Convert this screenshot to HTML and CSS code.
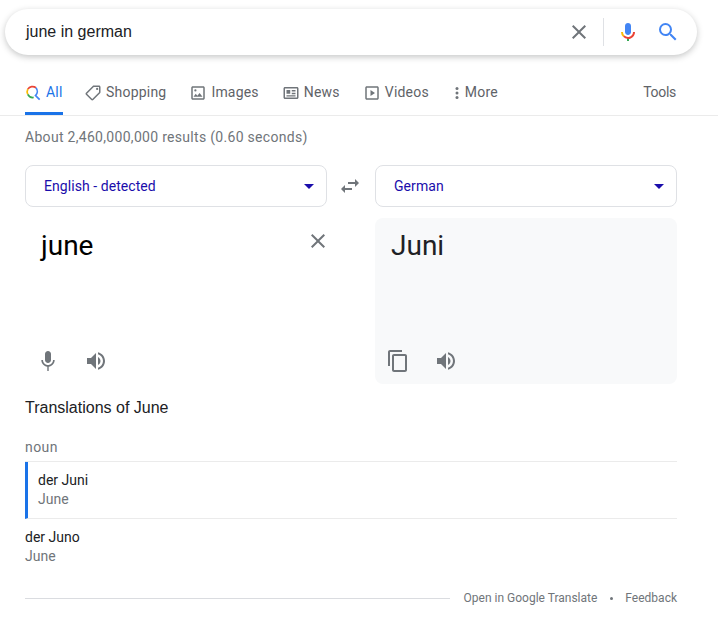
FILE: index.html
```html
<!DOCTYPE html>
<html lang="en">
<head>
  <meta charset="UTF-8">
  <title>june in german</title>
  <link rel="stylesheet" href="styles.css">
</head>
<body>

  <div class="search-bar">
    <span class="search-text">june in german</span>
    <svg class="search-clear" width="24" height="24" viewBox="0 0 24 24"><path fill="#70757a" d="M19 6.41 17.59 5 12 10.59 6.41 5 5 6.41 10.59 12 5 17.59 6.41 19 12 13.41 17.59 19 19 17.59 13.41 12z"/></svg>
    <span class="search-divider"></span>
    <svg class="search-mic" width="24" height="24" viewBox="0 0 24 24">
      <path fill="#4285f4" d="M12 15c1.66 0 3-1.31 3-2.97V5.97C15 4.31 13.66 3 12 3S9 4.31 9 5.97v6.06C9 13.69 10.34 15 12 15z"/>
      <path fill="#34a853" d="M11 18.1h2V21h-2z"/>
      <path fill="#fbbc05" d="M7.05 16.87A6.94 6.94 0 0 1 5 12h2c0 1.38.56 2.63 1.47 3.53z"/>
      <path fill="#ea4335" d="M12 17c-1.38 0-2.63-.56-3.53-1.47l-1.42 1.34A6.96 6.96 0 0 0 12 19c1.93 0 3.68-.78 4.95-2.05 1.27-1.27 2.05-3.02 2.05-4.95h-2c0 2.76-2.24 5-5 5z"/>
    </svg>
    <svg class="search-go" width="24" height="24" viewBox="0 0 24 24"><path fill="#4285f4" d="M15.5 14h-.79l-.28-.27A6.47 6.47 0 0 0 16 9.5 6.5 6.5 0 1 0 9.5 16c1.61 0 3.09-.59 4.23-1.57l.27.28v.79l5 4.99L20.49 19l-4.99-5zm-6 0C7.01 14 5 11.99 5 9.5S7.01 5 9.5 5 14 7.01 14 9.5 11.99 14 9.5 14z"/></svg>
  </div>

  <div class="tabs">
    <a class="tab tab-active">
      <svg width="16" height="16" viewBox="0 0 24 24" fill="none" stroke-width="2.6">
        <path stroke="#ea4335" d="M4.2 6.2A8.5 8.5 0 0 1 16.4 4.2"/>
        <path stroke="#fbbc05" d="M4.2 6.2A8.5 8.5 0 0 0 4.2 14"/>
        <path stroke="#34a853" d="M4.2 14A8.5 8.5 0 0 0 13 18.7"/>
        <path stroke="#4285f4" d="M16.4 4.2A8.5 8.5 0 0 1 15.8 15.8L22 22"/>
      </svg>
      All
    </a>
    <a class="tab">
      <svg width="18" height="18" viewBox="0 0 24 24"><g transform="matrix(-1 0 0 1 24 0)"><path fill="#70757a" d="M21.41 11.58l-9-9C12.05 2.22 11.55 2 11 2H4c-1.1 0-2 .9-2 2v7c0 .55.22 1.05.59 1.42l9 9c.36.36.86.58 1.41.58s1.05-.22 1.41-.59l7-7c.37-.36.59-.86.59-1.41s-.23-1.06-.59-1.42zM13 20.01L4 11V4h7v-.01l9 9-7 7.02z"/><circle fill="#70757a" cx="6.5" cy="6.5" r="1.5"/></g></svg>
      Shopping
    </a>
    <a class="tab">
      <svg width="18" height="18" viewBox="0 0 24 24"><path fill="#70757a" d="M19 5v14H5V5h14m0-2H5c-1.1 0-2 .9-2 2v14c0 1.1.9 2 2 2h14c1.1 0 2-.9 2-2V5c0-1.1-.9-2-2-2z"/><path fill="#70757a" d="M14.14 11.86l-3 3.87L9 13.14 6 17h12l-3.86-5.14z"/><circle fill="#70757a" cx="8.5" cy="8.5" r="1.5"/></svg>
      Images
    </a>
    <a class="tab">
      <svg width="18" height="18" viewBox="0 0 24 24"><path fill="#70757a" d="M20 4H4c-1.1 0-2 .9-2 2v12c0 1.1.9 2 2 2h16c1.1 0 2-.9 2-2V6c0-1.1-.9-2-2-2zm0 14H4V6h16v12z"/><path fill="#70757a" d="M6 8h5v5H6zM13 8h5v2h-5zM13 11.5h5v2h-5zM6 15h12v1.5H6z"/></svg>
      News
    </a>
    <a class="tab">
      <svg width="18" height="18" viewBox="0 0 24 24"><path fill="#70757a" d="M10 8v8l6-4-6-4zM19 3H5c-1.1 0-2 .9-2 2v14c0 1.1.9 2 2 2h14c1.1 0 2-.9 2-2V5c0-1.1-.9-2-2-2zm0 16H5V5h14v14z"/></svg>
      Videos
    </a>
    <a class="tab tab-more">
      <svg width="10" height="16" viewBox="0 0 10 16"><circle fill="#70757a" cx="5" cy="3.500" r="1.500"/><circle fill="#70757a" cx="5" cy="8" r="1.500"/><circle fill="#70757a" cx="5" cy="12.500" r="1.500"/></svg>
      More
    </a>
    <a class="tab tab-tools">Tools</a>
  </div>

  <div class="content">
    <div class="result-stats">About 2,460,000,000 results (0.60 seconds)</div>

    <div class="lang-row">
      <div class="lang-select"><span>English - detected</span><i class="caret"></i></div>
      <svg class="swap" width="24" height="24" viewBox="0 0 24 24"><path fill="#70757a" d="M6.99 11 3 15l3.99 4v-3H14v-2H6.99v-3zM21 9l-3.99-4v3H10v2h7.01v3L21 9z"/></svg>
      <div class="lang-select"><span>German</span><i class="caret"></i></div>
    </div>

    <div class="panels">
      <div class="panel panel-source">
        <div class="panel-top">
          <span class="panel-text source-text">june</span>
          <svg class="source-clear" width="24" height="24" viewBox="0 0 24 24"><path fill="#70757a" d="M19 6.41 17.59 5 12 10.59 6.41 5 5 6.41 10.59 12 5 17.59 6.41 19 12 13.41 17.59 19 19 17.59 13.41 12z"/></svg>
        </div>
        <div class="panel-icons">
          <svg width="24" height="24" viewBox="0 0 24 24"><path fill="#70757a" d="M12 14c1.66 0 3-1.34 3-3V5c0-1.66-1.34-3-3-3S9 3.340 9 5v6c0 1.66 1.34 3 3 3z"/><path fill="#70757a" d="M17 11c0 2.76-2.24 5-5 5s-5-2.240-5-5H5.300c0 3.410 2.720 6.230 6 6.720V22h1.400v-4.280c3.280-.49 6-3.310 6-6.720H17z"/></svg>
          <svg width="24" height="24" viewBox="0 0 24 24"><path fill="#70757a" d="M3 9v6h4l5 5V4L7 9H3zm13.500 3c0-1.770-1.020-3.290-2.500-4.030v8.050c1.480-.730 2.500-2.250 2.500-4.020zM14 3.230v2.060c2.890.860 5 3.540 5 6.710s-2.110 5.850-5 6.710v2.060c4.010-.910 7-4.490 7-8.770s-2.990-7.860-7-8.770z"/></svg>
        </div>
      </div>
      <div class="panel panel-target">
        <span class="panel-text">Juni</span>
        <div class="panel-icons">
          <svg width="24" height="24" viewBox="0 0 24 24"><path fill="#70757a" d="M16 1H4c-1.100 0-2 .9-2 2v14h2V3h12V1zm3 4H8c-1.100 0-2 .9-2 2v14c0 1.100.9 2 2 2h11c1.100 0 2-.9 2-2V7c0-1.100-.9-2-2-2zm0 16H8V7h11v14z"/></svg>
          <svg width="24" height="24" viewBox="0 0 24 24"><path fill="#70757a" d="M3 9v6h4l5 5V4L7 9H3zm13.500 3c0-1.770-1.020-3.290-2.500-4.030v8.050c1.480-.730 2.500-2.250 2.500-4.020zM14 3.230v2.060c2.890.860 5 3.540 5 6.710s-2.110 5.850-5 6.710v2.060c4.010-.910 7-4.490 7-8.770s-2.990-7.860-7-8.770z"/></svg>
        </div>
      </div>
    </div>

    <h3 class="translations-title">Translations of June</h3>
    <div class="pos">noun</div>
    <div class="entry entry-selected">
      <div class="entry-word">der Juni</div>
      <div class="entry-gloss">June</div>
    </div>
    <div class="entry">
      <div class="entry-word">der Juno</div>
      <div class="entry-gloss">June</div>
    </div>

    <div class="footer">
      <span class="footer-rule"></span>
      <a>Open in Google Translate</a>
      <span class="footer-dot"></span>
      <a>Feedback</a>
    </div>
  </div>

</body>
</html>
```

FILE: styles.css
```css
body {
  font-family: Roboto, Arial, sans-serif;
  background-color: #fff;
  margin: 0;
  padding: 0;
  height: 627px;
  overflow: hidden;
}

.search-bar {
  display: flex;
  align-items: center;
  box-sizing: border-box;
  width: 692px;
  height: 46px;
  margin: 9px 0 0 5px;
  padding: 0 17px 0 21px;
  border-radius: 23px;
  background-color: #fff;
  box-shadow: 0 2px 6px rgba(32,33,36,0.26);
}

.search-text {
  flex: 1;
  font-family: "Liberation Sans", Arial, sans-serif;
  font-size: 16px;
  color: #202124;
}

.search-clear {
  margin-right: 12px;
}

.search-divider {
  width: 1px;
  height: 28px;
  background-color: #dfe1e5;
  margin-right: 12px;
}

.search-mic {
  margin-right: 16px;
}

.tabs {
  display: flex;
  align-items: flex-start;
  box-sizing: border-box;
  height: 61px;
  padding: 23px 42px 0 25px;
  border-bottom: 1px solid #ebebeb;
  font-size: 14px;
  line-height: 18px;
  color: #5f6368;
}

.tab {
  display: flex;
  align-items: flex-start;
  gap: 4px;
  box-sizing: border-box;
  height: 37px;
  padding-top: 5px;
  margin-right: 23px;
  letter-spacing: 0.2px;
  white-space: nowrap;
}

.tab svg {
  margin-top: 1px;
}

.tab-active {
  gap: 5px;
  margin-right: 21.5px;
  color: #1a73e8;
  border-bottom: 3px solid #1a73e8;
}

.tab-active svg,
.tab-more svg {
  margin-top: 2px;
}

.tab-more {
  gap: 3px;
}

.tab-tools {
  margin: 0 0 0 auto;
  letter-spacing: -0.3px;
}

.content {
  width: 652px;
  margin-left: 25px;
}

.result-stats {
  margin-top: 12px;
  font-size: 14px;
  line-height: 18px;
  letter-spacing: 0.3px;
  color: #70757a;
}

.lang-row {
  display: flex;
  align-items: center;
  margin-top: 19px;
}

.swap {
  margin: 0 13px 0 11px;
}

.lang-select {
  display: flex;
  align-items: center;
  justify-content: space-between;
  box-sizing: border-box;
  width: 302px;
  height: 42px;
  padding: 0 12px 0 18px;
  border: 1px solid #dfe1e5;
  border-radius: 8px;
  font-size: 14px;
  letter-spacing: 0.06px;
  color: #1a0dab;
}

.caret {
  width: 0;
  height: 0;
  margin-top: 1px;
  border-left: 5px solid transparent;
  border-right: 5px solid transparent;
  border-top: 5px solid #1a0dab;
}

.panels {
  display: flex;
  justify-content: space-between;
  margin-top: 11px;
}

.panel {
  display: flex;
  flex-direction: column;
  justify-content: space-between;
  box-sizing: border-box;
  width: 302px;
  height: 166px;
  padding: 11px 0 11px 16px;
}

.panel-top {
  display: flex;
  justify-content: space-between;
}

.panel-target {
  background-color: #f8f9fa;
  border-radius: 8px;
}

.panel-text {
  font-size: 28px;
  line-height: 34px;
  color: #202124;
}

.source-text {
  color: #000;
}

.source-clear {
  margin-right: -3px;
}

.panel-icons {
  display: flex;
  gap: 24px;
  margin-left: -5px;
}

.translations-title {
  margin: 14px 0 0;
  font-family: "Liberation Sans", Arial, sans-serif;
  font-size: 16px;
  font-weight: 400;
  line-height: 20px;
  color: #202124;
}

.pos {
  margin-top: 20px;
  padding-bottom: 4px;
  border-bottom: 1px solid #ebebeb;
  font-size: 14px;
  line-height: 19px;
  letter-spacing: 0.4px;
  color: #70757a;
}

.entry {
  box-sizing: border-box;
  height: 57px;
  padding-top: 9px;
  font-size: 14px;
  line-height: 19px;
}

.entry-selected {
  padding-left: 10px;
  border-left: 3px solid #1a73e8;
  border-bottom: 1px solid #ebebeb;
}

.entry-word {
  color: #202124;
}

.entry-gloss {
  color: #70757a;
}

.footer {
  display: flex;
  align-items: center;
  margin-top: 15px;
  font-size: 12px;
  color: #70757a;
}

.footer-rule {
  flex: 1;
  height: 1px;
  background-color: #dadce0;
  margin-right: 14px;
}

.footer-dot {
  width: 3px;
  height: 3px;
  margin: 0 12px 0 13px;
  border-radius: 50%;
  background-color: #70757a;
}
```
